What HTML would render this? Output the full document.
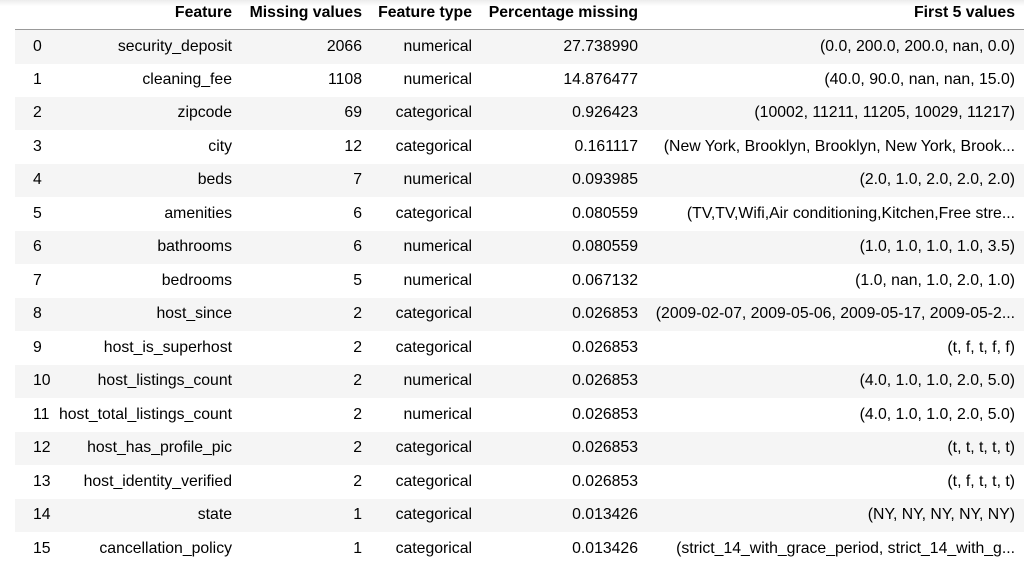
<!DOCTYPE html>
<html><head><meta charset="utf-8"><style>
body{margin:0;width:1024px;height:571px;background:#fff;font-family:"Liberation Sans",Arial,sans-serif;font-size:15.8px;color:#000;position:relative;overflow:hidden}
.top{position:absolute;left:0;top:0;width:1024px;height:6px;background:linear-gradient(#ececec,#fff)}
.hl{position:absolute;left:15px;width:1009px;top:29px;height:1px;background:#999}
.s{position:absolute;left:15px;width:1009px;height:33.5px;background:#f5f5f5}
.c{position:absolute;white-space:nowrap;line-height:18px}
.r{text-align:right}
.h{font-weight:bold}
</style></head><body>
<div class="top"></div>
<div class="hl"></div>
<div id="t"></div>
<script>
const rows=[
["security_deposit","2066","numerical","27.738990","(0.0, 200.0, 200.0, nan, 0.0)"],
["cleaning_fee","1108","numerical","14.876477","(40.0, 90.0, nan, nan, 15.0)"],
["zipcode","69","categorical","0.926423","(10002, 11211, 11205, 10029, 11217)"],
["city","12","categorical","0.161117","(New York, Brooklyn, Brooklyn, New York, Brook..."],
["beds","7","numerical","0.093985","(2.0, 1.0, 2.0, 2.0, 2.0)"],
["amenities","6","categorical","0.080559","(TV,TV,Wifi,Air conditioning,Kitchen,Free stre..."],
["bathrooms","6","numerical","0.080559","(1.0, 1.0, 1.0, 1.0, 3.5)"],
["bedrooms","5","numerical","0.067132","(1.0, nan, 1.0, 2.0, 1.0)"],
["host_since","2","categorical","0.026853","(2009-02-07, 2009-05-06, 2009-05-17, 2009-05-2..."],
["host_is_superhost","2","categorical","0.026853","(t, f, t, f, f)"],
["host_listings_count","2","numerical","0.026853","(4.0, 1.0, 1.0, 2.0, 5.0)"],
["host_total_listings_count","2","numerical","0.026853","(4.0, 1.0, 1.0, 2.0, 5.0)"],
["host_has_profile_pic","2","categorical","0.026853","(t, t, t, t, t)"],
["host_identity_verified","2","categorical","0.026853","(t, f, t, t, t)"],
["state","1","categorical","0.013426","(NY, NY, NY, NY, NY)"],
["cancellation_policy","1","categorical","0.013426","(strict_14_with_grace_period, strict_14_with_g..."]];
const R=[232,362,472,638,1015];
let h='';
function cell(txt,right,y,cls){h+=`<div class="c r ${cls||''}" style="right:${1024-right}px;top:${y-9}px">${txt}</div>`;}
["Feature","Missing values","Feature type","Percentage missing","First 5 values"].forEach((t,i)=>cell(t,R[i],12.5,'h'));
rows.forEach((r,i)=>{
 const top=30+33.47*i, y=46.5+33.47*i;
 if(i%2==0) h+=`<div class="s" style="top:${top}px"></div>`;
 h+=`<div class="c" style="left:33px;top:${y-9}px">${i}</div>`;
 r.forEach((t,j)=>cell(t,R[j],y));
});
document.getElementById('t').innerHTML=h;
</script>
</body></html>
